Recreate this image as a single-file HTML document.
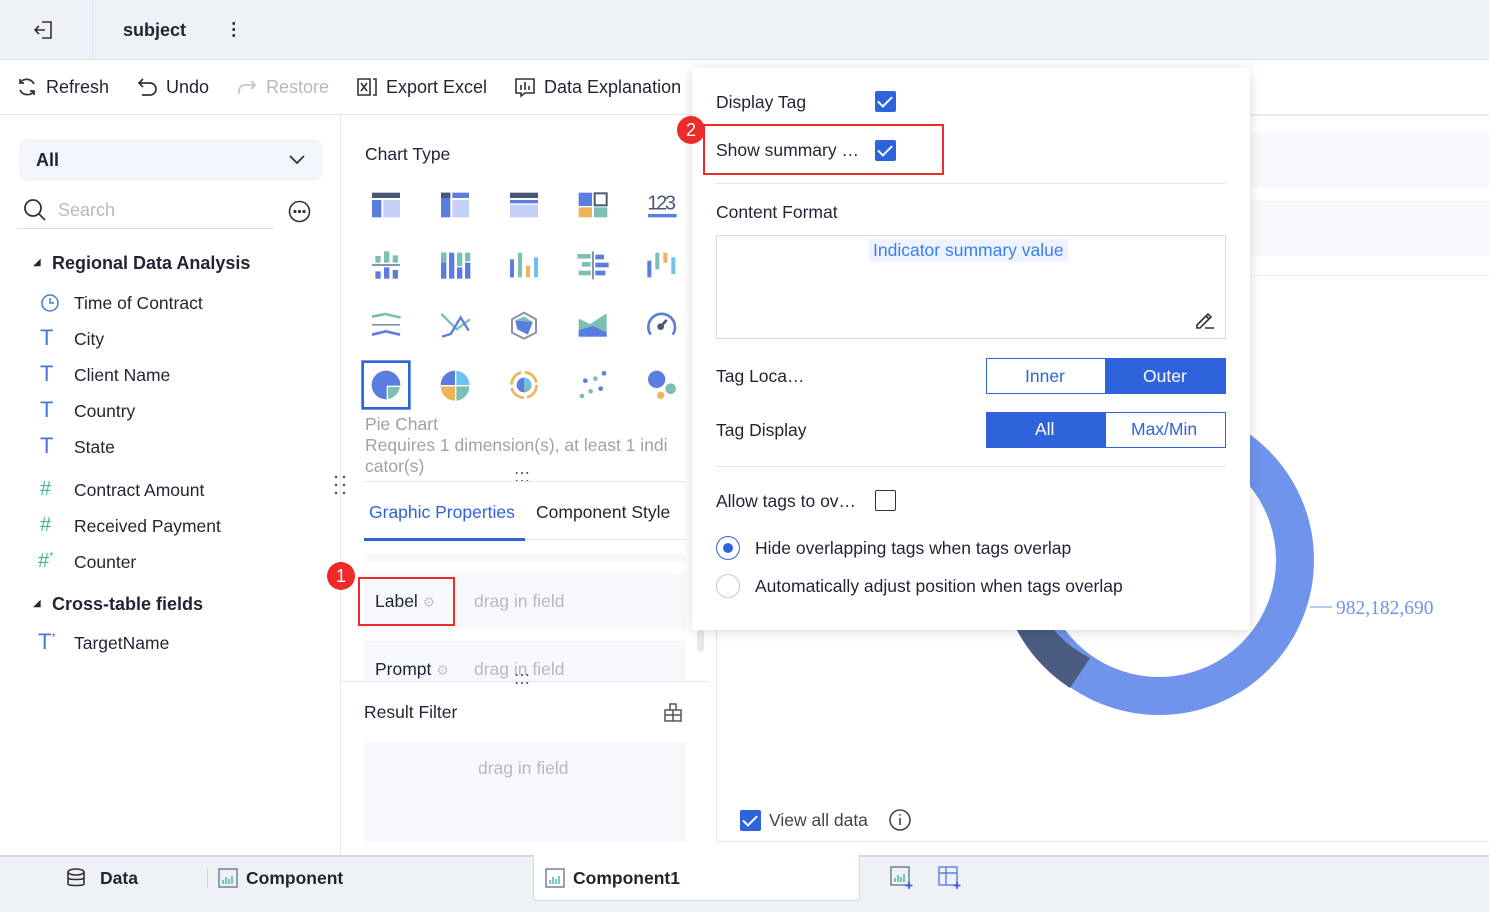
<!DOCTYPE html>
<html><head><meta charset="utf-8"><style>
*{box-sizing:border-box;margin:0;padding:0}
body{width:1489px;height:912px;position:relative;overflow:hidden;background:#fff;font-family:"Liberation Sans",sans-serif;color:#1f2533;font-size:17.5px}
.a{position:absolute;white-space:nowrap}
.g{color:#b5b9c2}
.cb{position:absolute;width:21px;height:21px;background:#2e63dc;border-radius:2px}
.cb:after{content:"";position:absolute;left:6px;top:2px;width:6px;height:12px;border:solid #fff;border-width:0 2.5px 2.5px 0;transform:rotate(45deg)}
.ic{position:absolute}
.hash{color:#3fb39c;font-size:20px;position:absolute}
.tt{color:#4a78d8;font-size:22px;position:absolute;font-weight:300}
.badge{position:absolute;width:28px;height:28px;border-radius:50%;background:#ee2b2b;color:#fff;font-size:18px;text-align:center;line-height:28px}
</style></head><body>
<!-- top bar -->
<div class="a" style="left:0;top:0;width:1489px;height:60px;background:#eef1f6;border-bottom:1px solid #e1e4ea"></div>
<div class="a" style="left:92px;top:0;width:1px;height:60px;background:#e1e4ea"></div>
<svg class="ic" style="left:33px;top:19px" width="22" height="22" viewBox="0 0 22 22" fill="none" stroke="#333" stroke-width="1.6"><path d="M9 3h9v16H9M2 11h10M6 7l-4 4 4 4"/></svg>
<div class="a" style="left:123px;top:20px;font-weight:bold;font-size:18px">subject</div>
<div class="a" style="left:225px;top:19px;font-weight:bold">⋮</div>
<!-- toolbar -->
<div class="a" style="left:0;top:114px;width:1489px;height:1px;background:#e6e8ee"></div>
<svg class="ic" style="left:16px;top:76px" width="22" height="22" viewBox="0 0 22 22" fill="none" stroke="#333" stroke-width="1.7"><path d="M18 8a8 8 0 0 0-14-1M4 14a8 8 0 0 0 14 1M4 3v4h4M18 19v-4h-4"/></svg>
<div class="a" style="left:46px;top:77px;font-size:18px">Refresh</div>
<svg class="ic" style="left:137px;top:76px" width="22" height="22" viewBox="0 0 22 22" fill="none" stroke="#333" stroke-width="1.7"><path d="M6 3L2 7l4 4M2 7h11a6 6 0 0 1 0 12H5"/></svg>
<div class="a" style="left:166px;top:77px;font-size:18px">Undo</div>
<svg class="ic" style="left:236px;top:76px" width="22" height="22" viewBox="0 0 22 22" fill="none" stroke="#c2c6cd" stroke-width="1.7"><path d="M15 5l4 4-4 4M19 9H9a6 6 0 0 0-6 6v3"/></svg>
<div class="a g" style="left:266px;top:77px;font-size:18px">Restore</div>
<svg class="ic" style="left:356px;top:76px" width="22" height="22" viewBox="0 0 22 22" fill="none" stroke="#333" stroke-width="1.6"><path d="M2 3h12v16H2zM17 3h3v16h-3M5 7l6 8M11 7l-6 8"/></svg>
<div class="a" style="left:386px;top:77px;font-size:18px">Export Excel</div>
<svg class="ic" style="left:514px;top:76px" width="22" height="22" viewBox="0 0 22 22" fill="none" stroke="#333" stroke-width="1.6"><path d="M2 3h18v14h-9l-4 3v-3H2zM7 9v5M11 6v8M15 10v4"/></svg>
<div class="a" style="left:544px;top:77px;font-size:18px">Data Explanation</div>
<!-- left panel -->
<div class="a" style="left:340px;top:115px;width:1px;height:740px;background:#e6e8ee"></div>
<div class="a" style="left:19px;top:139px;width:303px;height:42px;background:#f2f5fb;border-radius:8px"></div>
<div class="a" style="left:36px;top:150px;font-weight:bold;font-size:18px">All</div>
<svg class="ic" style="left:288px;top:153px" width="18" height="14" viewBox="0 0 18 14" fill="none" stroke="#333" stroke-width="1.8"><path d="M2 3l7 7 7-7"/></svg>
<svg class="ic" style="left:23px;top:198px" width="24" height="24" viewBox="0 0 24 24" fill="none" stroke="#333" stroke-width="1.8"><circle cx="10" cy="10" r="8"/><path d="M16 16l6 6"/></svg>
<div class="a g" style="left:58px;top:200px;font-size:18px">Search</div>
<div class="a" style="left:17px;top:228px;width:256px;height:1px;background:#d9dce2"></div>
<svg class="ic" style="left:288px;top:200px" width="23" height="23" viewBox="0 0 23 23" fill="none" stroke="#333" stroke-width="1.6"><circle cx="11.5" cy="11.5" r="10"/><circle cx="7" cy="11.5" r=".8" fill="#333"/><circle cx="11.5" cy="11.5" r=".8" fill="#333"/><circle cx="16" cy="11.5" r=".8" fill="#333"/></svg>
<div class="a" style="left:33px;top:257px;font-size:10px">◢</div>
<div class="a" style="left:52px;top:253px;font-weight:bold;font-size:18px">Regional Data Analysis</div>
<svg class="ic" style="left:40px;top:293px" width="20" height="20" viewBox="0 0 20 20" fill="none" stroke="#4a78d8" stroke-width="1.5"><circle cx="10" cy="10" r="8"/><path d="M10 5v5h4"/></svg>
<div class="a" style="left:74px;top:293px">Time of Contract</div>
<div class="tt" style="left:40px;top:325px">T</div><div class="a" style="left:74px;top:329px">City</div>
<div class="tt" style="left:40px;top:361px">T</div><div class="a" style="left:74px;top:365px">Client Name</div>
<div class="tt" style="left:40px;top:397px">T</div><div class="a" style="left:74px;top:401px">Country</div>
<div class="tt" style="left:40px;top:433px">T</div><div class="a" style="left:74px;top:437px">State</div>
<div class="hash" style="left:40px;top:478px">#</div><div class="a" style="left:74px;top:480px">Contract Amount</div>
<div class="hash" style="left:40px;top:514px">#</div><div class="a" style="left:74px;top:516px">Received Payment</div>
<div class="hash" style="left:38px;top:550px">#<sup style="font-size:11px">*</sup></div><div class="a" style="left:74px;top:552px">Counter</div>
<div class="a" style="left:33px;top:598px;font-size:10px">◢</div>
<div class="a" style="left:52px;top:594px;font-weight:bold;font-size:18px">Cross-table fields</div>
<div class="tt" style="left:38px;top:629px">T<sup style="font-size:11px;color:#4a78d8">*</sup></div><div class="a" style="left:74px;top:633px">TargetName</div>
<svg class="ic" style="left:333px;top:474px" width="14" height="22" viewBox="0 0 14 22" fill="#555"><circle cx="3" cy="3" r="1.3"/><circle cx="3" cy="11" r="1.3"/><circle cx="3" cy="19" r="1.3"/><circle cx="11" cy="3" r="1.3"/><circle cx="11" cy="11" r="1.3"/><circle cx="11" cy="19" r="1.3"/></svg>
<!-- middle -->
<div class="a" style="left:365px;top:144px">Chart Type</div>
<svg class="ic" style="left:340px;top:170px" width="350" height="250" viewBox="0 0 1050 750">
<g>
<rect x="96" y="68" width="84" height="16" fill="#4a5878"/><rect x="96" y="90" width="28" height="52" fill="#5b7de0"/><rect x="130" y="90" width="50" height="52" fill="#c4d0f5"/>
<rect x="303" y="68" width="28" height="74" fill="#5b7de0"/><rect x="303" y="68" width="28" height="16" fill="#4a5878"/><rect x="337" y="68" width="50" height="16" fill="#5b7de0"/><rect x="337" y="90" width="50" height="52" fill="#c4d0f5"/>
<rect x="510" y="68" width="84" height="16" fill="#4a5878"/><rect x="510" y="90" width="84" height="10" fill="#5b7de0"/><rect x="510" y="104" width="84" height="38" fill="#c4d0f5"/>
<rect x="716" y="68" width="40" height="40" fill="#5b7de0"/><rect x="764" y="70" width="36" height="36" fill="none" stroke="#4a5878" stroke-width="6"/><rect x="716" y="112" width="40" height="30" fill="#f0b35b"/><rect x="762" y="112" width="40" height="30" fill="#7cc0b5"/>
<text x="922" y="118" font-size="60" fill="#4a5878" font-family="Liberation Sans" textLength="86">123</text><rect x="924" y="132" width="86" height="10" fill="#5b7de0"/>
<rect x="96" y="282" width="84" height="6" fill="#8a93a8"/><rect x="106" y="258" width="16" height="20" fill="#7cc0b5"/><rect x="132" y="244" width="16" height="34" fill="#7cc0b5"/><rect x="158" y="256" width="16" height="22" fill="#7cc0b5"/><rect x="106" y="304" width="16" height="22" fill="#5b7de0"/><rect x="132" y="292" width="16" height="34" fill="#5b7de0"/><rect x="158" y="300" width="16" height="26" fill="#5b7de0"/>
<rect x="303" y="248" width="16" height="78" fill="#5b7de0"/><rect x="303" y="248" width="16" height="30" fill="#7cc0b5"/><rect x="327" y="248" width="16" height="78" fill="#5b7de0"/><rect x="351" y="248" width="16" height="40" fill="#7cc0b5"/><rect x="351" y="292" width="16" height="34" fill="#5b7de0"/><rect x="375" y="248" width="16" height="26" fill="#7cc0b5"/><rect x="375" y="278" width="16" height="48" fill="#5b7de0"/>
<rect x="510" y="268" width="12" height="54" fill="#5b7de0"/><rect x="534" y="248" width="12" height="74" fill="#7cc0b5"/><rect x="558" y="288" width="12" height="34" fill="#f0b35b"/><rect x="582" y="262" width="12" height="60" fill="#6ec2ef"/>
<rect x="756" y="244" width="6" height="84" fill="#8a93a8"/><rect x="712" y="252" width="40" height="14" fill="#7cc0b5"/><rect x="766" y="254" width="26" height="14" fill="#5b7de0"/><rect x="726" y="276" width="26" height="14" fill="#7cc0b5"/><rect x="766" y="278" width="40" height="14" fill="#5b7de0"/><rect x="716" y="302" width="36" height="14" fill="#7cc0b5"/><rect x="766" y="302" width="30" height="14" fill="#5b7de0"/>
<rect x="922" y="272" width="12" height="50" fill="#5b7de0"/><rect x="946" y="248" width="12" height="50" fill="#7cc0b5"/><rect x="970" y="248" width="12" height="30" fill="#f0b35b"/><rect x="994" y="262" width="12" height="50" fill="#6ec2ef"/>
<path d="M96 440l40-8 42 10 4 0" stroke="#7cc0b5" stroke-width="8" fill="none"/><rect x="96" y="462" width="84" height="5" fill="#8a93a8"/><path d="M96 494l42-10 42 10" stroke="#5b7de0" stroke-width="8" fill="none"/>
<path d="M304 432l46 46 40 -30" stroke="#7cc0b5" stroke-width="7" fill="none"/><path d="M306 500l26-8 30-50 24 40" stroke="#5b7de0" stroke-width="7" fill="none"/>
<polygon points="552,428 588,448 588,488 552,506 516,488 516,448" fill="none" stroke="#8a93a8" stroke-width="6"/><polygon points="552,440 578,456 564,494 532,478 526,452" fill="#5b7de0"/><polygon points="552,440 578,456 526,452" fill="#7cc0b5"/>
<polygon points="716,500 716,446 750,462 800,430 800,500" fill="#7cc0b5"/><polygon points="716,500 716,480 760,468 800,488 800,500" fill="#5b7de0"/>
<path d="M932 494a40 40 0 1 1 66 0" stroke="#5b7de0" stroke-width="8" fill="none"/><circle cx="962" cy="470" r="10" fill="#4a5878"/><path d="M962 470l18-20" stroke="#4a5878" stroke-width="8"/>
<rect x="68" y="575" width="140" height="140" fill="none" stroke="#2e63dc" stroke-width="8"/>
<circle cx="138" cy="645" r="43" fill="#5b7de0"/><path d="M142 649h40a43 43 0 0 1-40 40z" fill="#7cc0b5" stroke="#fff" stroke-width="4"/>
<path d="M345 645v-43a43 43 0 0 0-43 43z" fill="#5b7de0"/><path d="M349 645v-43a43 43 0 0 1 39 43z" fill="#6ec2ef"/><path d="M345 649h-43a43 43 0 0 0 43 43z" fill="#f0b35b"/><path d="M349 649h39a43 43 0 0 1-39 43z" fill="#7cc0b5"/>
<circle cx="552" cy="645" r="38" fill="none" stroke="#f0b35b" stroke-width="8" stroke-dasharray="50 10"/><circle cx="552" cy="645" r="22" fill="#5b7de0"/><path d="M552 645v-22a22 22 0 0 1 22 22z" fill="#6ec2ef"/><path d="M552 645h22a22 22 0 0 1-22 22z" fill="#7cc0b5"/>
<circle cx="736" cy="632" r="7" fill="#5b7de0"/><circle cx="766" cy="626" r="7" fill="#7cc0b5"/><circle cx="792" cy="610" r="7" fill="#5b7de0"/><circle cx="726" cy="678" r="7" fill="#7cc0b5"/><circle cx="752" cy="664" r="7" fill="#7cc0b5"/><circle cx="782" cy="656" r="7" fill="#5b7de0"/>
<circle cx="950" cy="628" r="26" fill="#5b7de0"/><circle cx="992" cy="656" r="16" fill="#7cc0b5"/><circle cx="962" cy="676" r="11" fill="#f0b35b"/>
</g></svg>
<div class="a g" style="left:365px;top:414px;color:#9da2ac;line-height:21px">Pie Chart<br>Requires 1 dimension(s), at least 1 indi<br>cator(s)</div>
<div class="a" style="left:514px;top:470px;font-size:16px;line-height:8px;color:#555">⋯<br>⋯</div>
<div class="a" style="left:364px;top:481px;width:322px;height:1px;background:#e6e8ee"></div>
<div class="a" style="left:369px;top:502px;color:#2e63dc">Graphic Properties</div>
<div class="a" style="left:536px;top:502px">Component Style</div>
<div class="a" style="left:364px;top:539px;width:322px;height:1px;background:#e6e8ee"></div>
<div class="a" style="left:364px;top:538px;width:161px;height:3px;background:#2e63dc"></div>
<div class="a" style="left:364px;top:554px;width:322px;height:8px;background:#f7f8fb"></div>
<div class="a" style="left:364px;top:573px;width:322px;height:56px;background:#f7f8fb"></div>
<div class="a" style="left:364px;top:641px;width:322px;height:40px;background:#f7f8fb"></div>
<div class="a" style="left:697px;top:630px;width:7px;height:22px;background:#e6e8ee;border-radius:4px"></div>
<div class="a" style="left:358px;top:577px;width:97px;height:49px;border:2px solid #ee2b2b"></div>
<div class="badge" style="left:327px;top:562px">1</div>
<div class="a" style="left:375px;top:591px">Label <span style="color:#c5c8cf;font-size:14px">⚙</span></div>
<div class="a g" style="left:474px;top:591px">drag in field</div>
<div class="a" style="left:375px;top:659px">Prompt <span style="color:#c5c8cf;font-size:14px">⚙</span></div>
<div class="a g" style="left:474px;top:659px">drag in field</div>
<div class="a" style="left:341px;top:681px;width:368px;height:1px;background:#e6e8ee"></div>
<div class="a" style="left:514px;top:672px;font-size:16px;line-height:8px;color:#555">⋯<br>⋯</div>
<div class="a" style="left:364px;top:702px">Result Filter</div>
<svg class="ic" style="left:663px;top:702px" width="20" height="20" viewBox="0 0 20 20" fill="none" stroke="#555" stroke-width="1.5"><path d="M2 8h16v11H2zM7 8V2h6v6M2 13h16M10 8v11"/></svg>
<div class="a" style="left:364px;top:742px;width:322px;height:100px;background:#f7f8fb"></div>
<div class="a g" style="left:478px;top:758px">drag in field</div>
<!-- right area -->
<div class="a" style="left:1250px;top:133px;width:239px;height:55px;background:#f7f8fb"></div>
<div class="a" style="left:1250px;top:201px;width:239px;height:55px;background:#f7f8fb"></div>
<div class="a" style="left:1250px;top:115px;width:239px;height:1px;background:#eceef2"></div>
<div class="a" style="left:1250px;top:275px;width:239px;height:1px;background:#eceef2"></div>
<div class="a" style="left:716px;top:620px;width:1px;height:222px;background:#e6e8ee"></div>
<div class="a" style="left:716px;top:841px;width:773px;height:1px;background:#e6e8ee"></div>
<svg class="ic" style="left:990px;top:390px" width="360" height="340" viewBox="990 390 360 340">
<circle cx="1159" cy="560" r="136" fill="none" stroke="#7093eb" stroke-width="38"/>
<path d="M1012 620a155 155 0 0 0 58 68l20-30a118 118 0 0 1-50-48z" fill="#4a5d80"/>
<path d="M1310 607h22" stroke="#7093eb" stroke-width="1"/>
</svg>
<div class="a" style="left:1336px;top:598px;font-family:'Liberation Serif',serif;font-size:19.5px;color:#7093eb">982,182,690</div>
<div class="cb" style="left:740px;top:810px"></div>
<div class="a" style="left:769px;top:810px;color:#444">View all data</div>
<svg class="ic" style="left:888px;top:808px" width="24" height="24" viewBox="0 0 24 24" fill="none" stroke="#444" stroke-width="1.6"><circle cx="12" cy="12" r="10"/><path d="M12 10v7M12 6v1.5"/></svg>
<!-- popup -->
<div class="a" style="left:692px;top:68px;width:558px;height:562px;background:#fff;box-shadow:0 2px 12px rgba(0,0,0,.15);border-radius:2px"></div>
<div class="a" style="left:716px;top:92px">Display Tag</div>
<div class="cb" style="left:875px;top:91px"></div>
<div class="a" style="left:703px;top:124px;width:241px;height:51px;border:2px solid #ee2b2b"></div>
<div class="badge" style="left:677px;top:116px">2</div>
<div class="a" style="left:716px;top:140px">Show summary …</div>
<div class="cb" style="left:875px;top:140px"></div>
<div class="a" style="left:716px;top:183px;width:510px;height:1px;background:#e3e5ea"></div>
<div class="a" style="left:716px;top:202px">Content Format</div>
<div class="a" style="left:716px;top:235px;width:510px;height:104px;border:1px solid #d9dce2"></div>
<div class="a" style="left:869px;top:239px;background:#eef3ff;color:#3a7ef0;padding:1px 4px">Indicator summary value</div>
<svg class="ic" style="left:1194px;top:308px" width="22" height="22" viewBox="0 0 22 22" fill="none" stroke="#333" stroke-width="1.6"><path d="M3 17l11-11 3 3-11 11H3zM12 8l3 3M11 20h9"/></svg>
<div class="a" style="left:716px;top:366px">Tag Loca…</div>
<div class="a" style="left:986px;top:358px;width:240px;height:36px;border:1px solid #2e63dc"></div>
<div class="a" style="left:1105px;top:358px;width:121px;height:36px;background:#2e63dc"></div>
<div class="a" style="left:1025px;top:366px;color:#2e63dc">Inner</div>
<div class="a" style="left:1143px;top:366px;color:#fff">Outer</div>
<div class="a" style="left:716px;top:420px">Tag Display</div>
<div class="a" style="left:986px;top:412px;width:240px;height:36px;border:1px solid #2e63dc"></div>
<div class="a" style="left:986px;top:412px;width:120px;height:36px;background:#2e63dc"></div>
<div class="a" style="left:1035px;top:419px;color:#fff">All</div>
<div class="a" style="left:1131px;top:419px;color:#2e63dc">Max/Min</div>
<div class="a" style="left:716px;top:466px;width:510px;height:1px;background:#e3e5ea"></div>
<div class="a" style="left:716px;top:491px">Allow tags to ov…</div>
<div class="a" style="left:875px;top:490px;width:21px;height:21px;border:1.5px solid #333;border-radius:2px"></div>
<div class="a" style="left:716px;top:536px;width:24px;height:24px;border:1.5px solid #2e63dc;border-radius:50%"></div>
<div class="a" style="left:723px;top:543px;width:10px;height:10px;background:#2e63dc;border-radius:50%"></div>
<div class="a" style="left:755px;top:538px">Hide overlapping tags when tags overlap</div>
<div class="a" style="left:716px;top:574px;width:24px;height:24px;border:1.5px solid #c5c8cf;border-radius:50%"></div>
<div class="a" style="left:755px;top:576px">Automatically adjust position when tags overlap</div>
<!-- bottom -->
<div class="a" style="left:0;top:855px;width:1489px;height:57px;background:#eef1f6;border-top:2px solid #d5d9e0"></div>
<div class="a" style="left:533px;top:854px;width:327px;height:47px;background:#fff;border:1px solid #d5d9e0;border-top:none;border-radius:0 0 4px 4px"></div>
<svg class="ic" style="left:66px;top:868px" width="20" height="20" viewBox="0 0 20 20" fill="none" stroke="#333" stroke-width="1.6"><ellipse cx="10" cy="4" rx="8" ry="3"/><path d="M2 4v12c0 2 16 2 16 0V4M2 10c0 2 16 2 16 0"/></svg>
<div class="a" style="left:100px;top:868px;font-weight:bold">Data</div>
<div class="a" style="left:207px;top:868px;width:1px;height:20px;background:#d5d9e0"></div>
<svg class="ic" style="left:218px;top:868px" width="20" height="20" viewBox="0 0 20 20" fill="none" stroke="#6a7a90" stroke-width="1.4"><rect x="1" y="1" width="18" height="18"/><path d="M5 16v-4M8 16v-7M11 16v-5M14 16v-8" stroke="#3fb39c"/></svg>
<div class="a" style="left:246px;top:868px;font-weight:bold">Component</div>
<svg class="ic" style="left:545px;top:868px" width="20" height="20" viewBox="0 0 20 20" fill="none" stroke="#6a7a90" stroke-width="1.4"><rect x="1" y="1" width="18" height="18"/><path d="M5 16v-4M8 16v-7M11 16v-5M14 16v-8" stroke="#3fb39c"/></svg>
<div class="a" style="left:573px;top:868px;font-weight:bold">Component1</div>
<svg class="ic" style="left:890px;top:866px" width="24" height="24" viewBox="0 0 24 24" fill="none" stroke="#6a7a90" stroke-width="1.4"><rect x="1" y="1" width="18" height="18"/><path d="M5 16v-4M8 16v-7M11 16v-5M14 16v-8" stroke="#3fb39c"/><path d="M19 16v7M15.5 19.5h7" stroke="#2e63dc" stroke-width="1.8"/></svg>
<svg class="ic" style="left:938px;top:866px" width="24" height="24" viewBox="0 0 24 24" fill="none" stroke="#5b7de0" stroke-width="1.4"><rect x="1" y="1" width="18" height="18"/><path d="M1 7h18M8 1v18"/><path d="M19 16v7M15.5 19.5h7" stroke="#2e63dc" stroke-width="1.8"/></svg>
</body></html>
